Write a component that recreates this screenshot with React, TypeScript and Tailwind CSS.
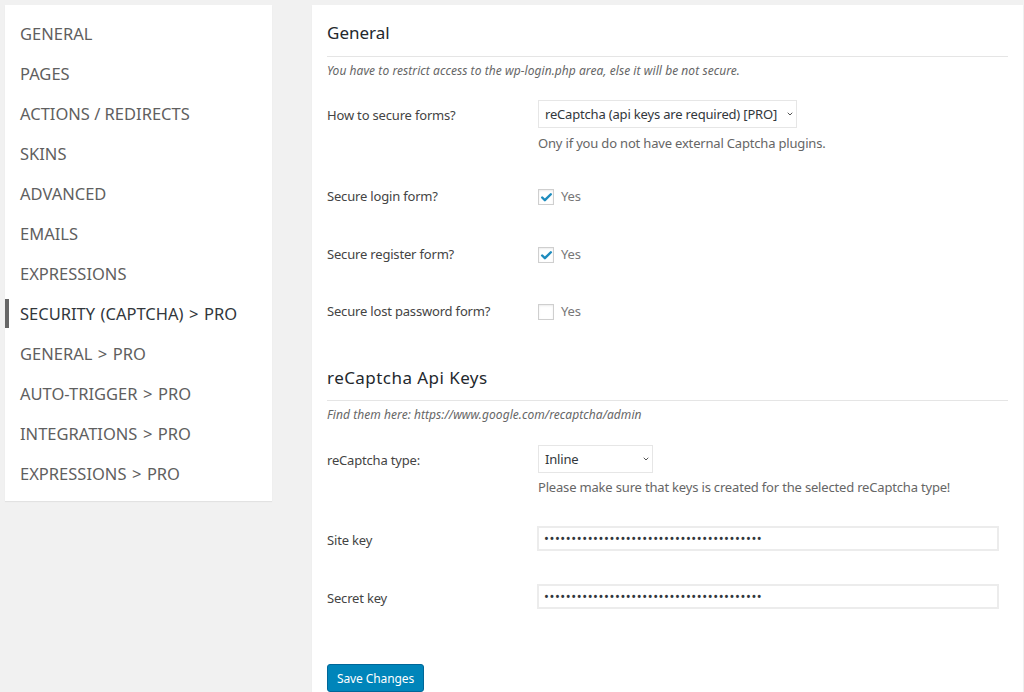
import { Check, ChevronDown } from 'lucide-react';

const menu = [
  'GENERAL',
  'PAGES',
  'ACTIONS / REDIRECTS',
  'SKINS',
  'ADVANCED',
  'EMAILS',
  'EXPRESSIONS',
  'SECURITY (CAPTCHA) > PRO',
  'GENERAL > PRO',
  'AUTO-TRIGGER > PRO',
  'INTEGRATIONS > PRO',
  'EXPRESSIONS > PRO',
];

const activeItem = 'SECURITY (CAPTCHA) > PRO';
const dots = '•'.repeat(40);

function SelectBox({ value, width }: { value: string; width: string }) {
  return (
    <div className={`${width} h-[28px] flex items-center justify-between pl-[6px] pr-[2px] border border-[#e6e6e6] bg-white text-[13px] tracking-[-0.18px] text-[#32373c] whitespace-nowrap`}>
      <span className="pt-[1px]">{value}</span>
      <ChevronDown className="w-[8px] h-[8px] text-[#555]" strokeWidth={3} />
    </div>
  );
}

function CheckRow({ label, checked, className }: { label: string; checked: boolean; className: string }) {
  return (
    <div className={`flex items-center ${className}`}>
      <div className="w-[211px] text-[13px] tracking-[-0.18px] text-[#444]">{label}</div>
      <div className="w-[16px] h-[16px] flex items-center justify-center border border-[#cfcfcf] bg-white shadow-[inset_0_1px_2px_rgba(0,0,0,0.08)]">
        {checked && <Check className="w-[13px] h-[13px] text-[#1e8cbe]" strokeWidth={4.5} />}
      </div>
      <span className="ml-[7px] text-[13px] tracking-[-0.18px] text-[#777]">Yes</span>
    </div>
  );
}

function KeyRow({ label, className }: { label: string; className: string }) {
  return (
    <div className={`flex items-center ${className}`}>
      <div className="w-[210px] pt-[5px] text-[13px] tracking-[-0.18px] text-[#444]">{label}</div>
      <div className="w-[462px] h-[25px] flex items-center pl-[5px] border-2 border-[#ececec] bg-white text-[#32373c] text-[13px] tracking-[0.57px] overflow-hidden">
        {dots}
      </div>
    </div>
  );
}

export default function App() {
  return (
    <div className="w-[1024px] h-[692px] overflow-hidden bg-[#f1f1f1] flex items-start font-['Noto_Sans','Open_Sans',sans-serif]">
      {/* Sidebar */}
      <aside className="w-[267px] ml-[5px] mt-[5px] pt-[9px] pb-[7px] bg-white shadow-[0_1px_1px_rgba(0,0,0,0.06)]">
        {menu.map((item) => (
          <div key={item} className="h-[40px] flex items-center relative pl-[15px]">
            {item === activeItem && <div className="absolute left-0 top-[5px] w-[4px] h-[29px] bg-[#666]" />}
            <span
              className={`text-[16.5px] ${item.includes('>') ? '[word-spacing:1.2px]' : ''} ${
                item === activeItem ? 'text-[#32373c]' : 'text-[#5f5f5f]'
              }`}
            >
              {item}
            </span>
          </div>
        ))}
      </aside>

      {/* Main panel */}
      <main className="w-[711px] h-[687px] ml-[40px] mt-[5px] px-[15px] bg-white shadow-[0_1px_1px_rgba(0,0,0,0.06)]">
        <h2 className="mt-[17px] text-[17px] leading-[22px] text-[#23282d]">General</h2>
        <div className="mt-[12px] h-px bg-[#e5e5e5]" />
        <p className="mt-[6px] text-[12px] tracking-[0.06px] leading-[16px] italic text-[#666]">
          You have to restrict access to the wp-login.php area, else it will be not secure.
        </p>

        <div className="mt-[21px] flex">
          <div className="w-[211px] pt-[6px] text-[13px] tracking-[-0.18px] text-[#444]">How to secure forms?</div>
          <div>
            <SelectBox value="reCaptcha (api keys are required) [PRO]" width="w-[259px]" />
            <p className="mt-[5px] text-[13px] tracking-[-0.18px] leading-[20px] text-[#666]">Ony if you do not have external Captcha plugins.</p>
          </div>
        </div>

        <CheckRow label="Secure login form?" checked className="mt-[34px] h-[20px]" />
        <CheckRow label="Secure register form?" checked className="mt-[38px] h-[20px]" />
        <CheckRow label="Secure lost password form?" checked={false} className="mt-[37px] h-[20px]" />

        <h2 className="mt-[45px] text-[17px] tracking-[0.45px] leading-[22px] text-[#23282d]">reCaptcha Api Keys</h2>
        <div className="mt-[11px] h-px bg-[#e5e5e5]" />
        <p className="mt-[6px] text-[12px] tracking-[0.06px] leading-[16px] italic text-[#666]">
          Find them here: https://www.google.com/recaptcha/admin
        </p>

        <div className="mt-[22px] flex">
          <div className="w-[211px] pt-[6px] text-[13px] tracking-[-0.18px] text-[#444]">reCaptcha type:</div>
          <div>
            <SelectBox value="Inline" width="w-[115px]" />
            <p className="mt-[4px] text-[13px] tracking-[-0.18px] leading-[20px] text-[#666]">Please make sure that keys is created for the selected reCaptcha type!</p>
          </div>
        </div>

        <KeyRow label="Site key" className="mt-[29px]" />
        <KeyRow label="Secret key" className="mt-[33px]" />

        <button className="mt-[55px] w-[97px] h-[28px] pt-[1px] rounded-[3px] bg-[#0085ba] border border-[#006799] text-[12px] tracking-[-0.1px] text-white">
          Save Changes
        </button>
      </main>
    </div>
  );
}
